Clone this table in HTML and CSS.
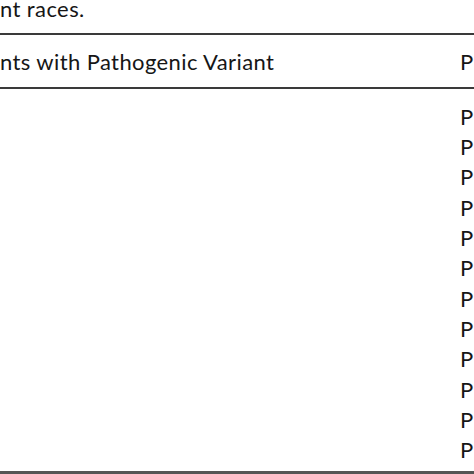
FILE: index.html
```html
<!DOCTYPE html>
<html>
<head>
<meta charset="utf-8">
<link rel="stylesheet" href="styles.css">
</head>
<body>
<div class="page">
  <p class="caption">nt races.</p>
  <div class="table">
    <div class="row head"><span class="c1">nts with Pathogenic Variant</span><span class="c2">P</span></div>
    <div class="tbody">
      <div class="row"><span class="c1"></span><span class="c2">P</span></div>
      <div class="row"><span class="c1"></span><span class="c2">P</span></div>
      <div class="row"><span class="c1"></span><span class="c2">P</span></div>
      <div class="row"><span class="c1"></span><span class="c2">P</span></div>
      <div class="row"><span class="c1"></span><span class="c2">P</span></div>
      <div class="row"><span class="c1"></span><span class="c2">P</span></div>
      <div class="row"><span class="c1"></span><span class="c2">P</span></div>
      <div class="row"><span class="c1"></span><span class="c2">P</span></div>
      <div class="row"><span class="c1"></span><span class="c2">P</span></div>
      <div class="row"><span class="c1"></span><span class="c2">P</span></div>
      <div class="row"><span class="c1"></span><span class="c2">P</span></div>
      <div class="row"><span class="c1"></span><span class="c2">P</span></div>
    </div>
  </div>
</div>
</body>
</html>
```
FILE: styles.css
```css
html, body {
  margin: 0;
  padding: 0;
  background: #ffffff;
}
.page {
  width: 474px;
  height: 474px;
  overflow: hidden;
  font-family: Lato, "Open Sans", sans-serif;
  font-size: 22px;
  letter-spacing: 0.4px;
  color: #161616;
}
.caption {
  margin: 0 0 16px 0;
  line-height: 17px;
  height: 17px;
}
.table {
  border-top: 2px solid #3a3a3a;
}
.row {
  display: flex;
  line-height: 26px;
}
.head {
  padding: 14px 0 12px 0;
  border-bottom: 2px solid #3a3a3a;
}
.tbody {
  padding: 12.85px 0 5.55px 0;
  border-bottom: 3px solid #555555;
}
.tbody .row {
  line-height: 30.3px;
  height: 30.3px;
}
.c1 {
  width: 460px;
  flex: none;
  white-space: nowrap;
}
.c2 {
  flex: none;
}
```
